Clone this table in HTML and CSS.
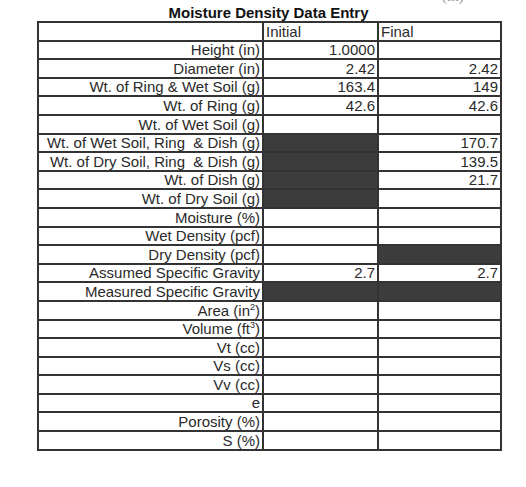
FILE: index.html
```html
<!DOCTYPE html>
<html>
<head>
<meta charset="utf-8">
<link rel="stylesheet" href="styles.css">
</head>
<body>
<div class="page">
  <div class="cut"><span class="cut-text">(in)</span></div>
  <div class="title">Moisture Density Data Entry</div>
  <table class="grid">
    <colgroup><col class="c1"><col class="c2"><col class="c3"></colgroup>
    <tr><td></td><td class="hd">Initial</td><td class="hd">Final</td></tr>
    <tr><td class="lb">Height (in)</td><td class="num">1.0000</td><td></td></tr>
    <tr><td class="lb">Diameter (in)</td><td class="num">2.42</td><td class="num">2.42</td></tr>
    <tr><td class="lb">Wt. of Ring &amp; Wet Soil (g)</td><td class="num">163.4</td><td class="num">149</td></tr>
    <tr><td class="lb">Wt. of Ring (g)</td><td class="num">42.6</td><td class="num">42.6</td></tr>
    <tr><td class="lb">Wt. of Wet Soil (g)</td><td></td><td></td></tr>
    <tr><td class="lb">Wt. of Wet Soil, Ring  &amp; Dish (g)</td><td class="dark"></td><td class="num">170.7</td></tr>
    <tr><td class="lb">Wt. of Dry Soil, Ring  &amp; Dish (g)</td><td class="dark"></td><td class="num">139.5</td></tr>
    <tr><td class="lb">Wt. of Dish (g)</td><td class="dark"></td><td class="num">21.7</td></tr>
    <tr><td class="lb">Wt. of Dry Soil (g)</td><td class="dark"></td><td></td></tr>
    <tr><td class="lb">Moisture (%)</td><td></td><td></td></tr>
    <tr><td class="lb">Wet Density (pcf)</td><td></td><td></td></tr>
    <tr><td class="lb">Dry Density (pcf)</td><td></td><td class="dark"></td></tr>
    <tr><td class="lb">Assumed Specific Gravity</td><td class="num">2.7</td><td class="num">2.7</td></tr>
    <tr><td class="lb">Measured Specific Gravity</td><td class="dark"></td><td class="dark"></td></tr>
    <tr><td class="lb">Area (in<sup>2</sup>)</td><td></td><td></td></tr>
    <tr><td class="lb">Volume (ft<sup>3</sup>)</td><td></td><td></td></tr>
    <tr><td class="lb">Vt (cc)</td><td></td><td></td></tr>
    <tr><td class="lb">Vs (cc)</td><td></td><td></td></tr>
    <tr><td class="lb">Vv (cc)</td><td></td><td></td></tr>
    <tr><td class="lb">e</td><td></td><td></td></tr>
    <tr><td class="lb">Porosity (%)</td><td></td><td></td></tr>
    <tr><td class="lb">S (%)</td><td></td><td></td></tr>
  </table>
</div>
</body>
</html>
```

FILE: styles.css
```css
html, body {
  margin: 0;
  padding: 0;
  background: #ffffff;
}
.page {
  width: 526px;
  height: 487px;
  overflow: hidden;
  font-family: "Liberation Sans", Arial, sans-serif;
  color: #222;
}
.cut {
  height: 5px;
  overflow: hidden;
  padding-left: 442px;
}
.cut-text {
  display: block;
  font-family: "Liberation Serif", "Times New Roman", serif;
  font-size: 15px;
  line-height: 16px;
  color: #999;
  margin-top: -12px;
}
.title {
  width: 463px;
  margin-left: 37px;
  text-align: center;
  font-weight: bold;
  font-size: 15px;
  line-height: 16px;
  height: 16px;
  color: #111;
}
.grid {
  margin-left: 37px;
  width: 463px;
  border-collapse: collapse;
  table-layout: fixed;
}
.c1 { width: 225px; }
.c2 { width: 115px; }
.c3 { width: 123px; }
.grid td {
  border: 2px solid #333;
  height: 16.6px;
  padding: 0 2px 0 2px;
  font-size: 15px;
  line-height: 16px;
  white-space: pre;
  vertical-align: bottom;
  color: #2a2a2a;
}
.lb { text-align: right; }
.num { text-align: right; }
.hd { text-align: left; }
.dark { background: #3c3c3c; }
sup {
  font-size: 9px;
  line-height: 0;
  vertical-align: 6px;
}
```
